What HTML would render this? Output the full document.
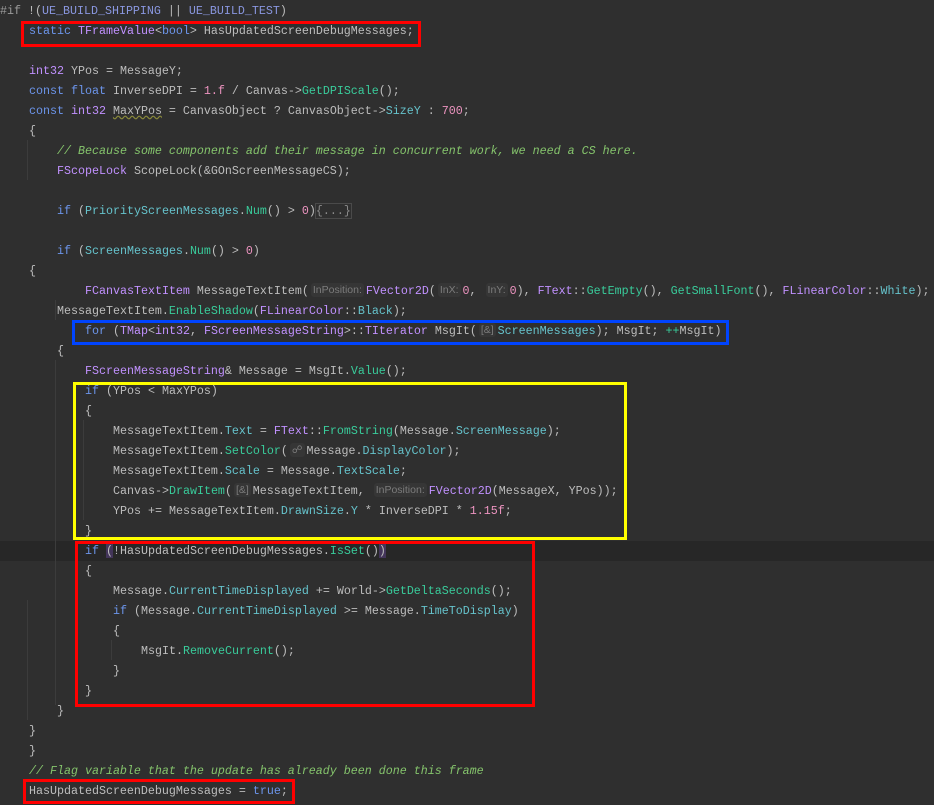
<!DOCTYPE html>
<html><head><meta charset="utf-8"><style>
html,body{margin:0;padding:0;background:#2f2f2f;width:934px;height:805px;overflow:hidden}
body{position:relative;font-family:"Liberation Mono",monospace;font-size:11.67px;color:#bdbdbd}
.l{position:absolute;left:0;height:20px;line-height:20px;white-space:pre}
.k{color:#6c95eb}.t{color:#c191ff}.f{color:#39cc9b}.d{color:#66c3cc}.n{color:#ed94c0}
.c{color:#85c46c;font-style:italic}.m{color:#9b9b9b}.mc{color:#8a97e0}
.h{display:inline-block;font-family:"Liberation Sans",sans-serif;font-size:10.5px;color:#7c7c7c;background:#363636;border-radius:3px;padding:0 2px;line-height:14px;margin:0 2px;vertical-align:1px}
.box{position:absolute;border:3px solid;box-sizing:border-box}
.g{position:absolute;width:1px;background:#3c3c3c}
</style></head><body>
<div style="position:absolute;left:0;top:541px;width:934px;height:20px;background:#272727"></div>
<div class="g" style="left:27px;top:140px;height:40px"></div>
<div class="g" style="left:55px;top:300px;height:20px"></div>
<div class="g" style="left:55px;top:360px;height:345px"></div>
<div class="g" style="left:27px;top:600px;height:120px"></div>
<div class="g" style="left:83px;top:420px;height:100px"></div>
<div class="g" style="left:111px;top:640px;height:20px"></div>

<div class="l" style="top:1px"><span class="m">#if</span> !(<span class="mc">UE_BUILD_SHIPPING</span> || <span class="mc">UE_BUILD_TEST</span>)</div>
<div class="l" style="top:21px;left:29px"><span class="k">static</span> <span class="t">TFrameValue</span>&lt;<span class="k">bool</span>&gt; HasUpdatedScreenDebugMessages;</div>
<div class="l" style="top:61px;left:29px"><span class="t">int32</span> YPos = MessageY;</div>
<div class="l" style="top:81px;left:29px"><span class="k">const float</span> InverseDPI = <span class="n">1.f</span> / Canvas-&gt;<span class="f">GetDPIScale</span>();</div>
<div class="l" style="top:101px;left:29px"><span class="k">const</span> <span class="t">int32</span> <span style="text-decoration:underline wavy #8a8a3a">MaxYPos</span> = CanvasObject ? CanvasObject-&gt;<span class="d">SizeY</span> : <span class="n">700</span>;</div>
<div class="l" style="top:121px;left:29px">{</div>
<div class="l" style="top:141px;left:57px"><span class="c">// Because some components add their message in concurrent work, we need a CS here.</span></div>
<div class="l" style="top:161px;left:57px"><span class="t">FScopeLock</span> ScopeLock(&amp;GOnScreenMessageCS);</div>
<div class="l" style="top:201px;left:57px"><span class="k">if</span> (<span class="d">PriorityScreenMessages</span>.<span class="f">Num</span>() &gt; <span class="n">0</span>)<span style="color:#8a8a8a;outline:1px solid #4a4a4a">{...}</span></div>
<div class="l" style="top:241px;left:57px"><span class="k">if</span> (<span class="d">ScreenMessages</span>.<span class="f">Num</span>() &gt; <span class="n">0</span>)</div>
<div class="l" style="top:261px;left:29px">{</div>
<div class="l" style="top:281px;left:85px"><span class="t">FCanvasTextItem</span> MessageTextItem(<span class="h">InPosition:</span><span class="t">FVector2D</span>(<span class="h">InX:</span><span class="n">0</span>, <span class="h">InY:</span><span class="n">0</span>), <span class="t">FText</span>::<span class="f">GetEmpty</span>(), <span class="f">GetSmallFont</span>(), <span class="t">FLinearColor</span>::<span class="d">White</span>);</div>
<div class="l" style="top:301px;left:57px">MessageTextItem.<span class="f">EnableShadow</span>(<span class="t">FLinearColor</span>::<span class="d">Black</span>);</div>
<div class="l" style="top:321px;left:85px"><span class="k">for</span> (<span class="t">TMap</span>&lt;<span class="t">int32</span>, <span class="t">FScreenMessageString</span>&gt;::<span class="t">TIterator</span> MsgIt(<span class="h">[&amp;]</span><span class="d">ScreenMessages</span>); MsgIt; <span class="f">++</span>MsgIt)</div>
<div class="l" style="top:341px;left:57px">{</div>
<div class="l" style="top:361px;left:85px"><span class="t">FScreenMessageString</span>&amp; Message = MsgIt.<span class="f">Value</span>();</div>
<div class="l" style="top:381px;left:85px"><span class="k">if</span> (YPos &lt; MaxYPos)</div>
<div class="l" style="top:401px;left:85px">{</div>
<div class="l" style="top:421px;left:113px">MessageTextItem.<span class="d">Text</span> = <span class="t">FText</span>::<span class="f">FromString</span>(Message.<span class="d">ScreenMessage</span>);</div>
<div class="l" style="top:441px;left:113px">MessageTextItem.<span class="f">SetColor</span>(<span class="h">&#9741;</span>Message.<span class="d">DisplayColor</span>);</div>
<div class="l" style="top:461px;left:113px">MessageTextItem.<span class="d">Scale</span> = Message.<span class="d">TextScale</span>;</div>
<div class="l" style="top:481px;left:113px">Canvas-&gt;<span class="f">DrawItem</span>(<span class="h">[&amp;]</span>MessageTextItem, <span class="h">InPosition:</span><span class="t">FVector2D</span>(MessageX, YPos));</div>
<div class="l" style="top:501px;left:113px">YPos += MessageTextItem.<span class="d">DrawnSize</span>.<span class="d">Y</span> * InverseDPI * <span class="n">1.15f</span>;</div>
<div class="l" style="top:521px;left:85px">}</div>
<div class="l" style="top:541px;left:85px"><span class="k">if</span> <span style="background:#43355a">(</span>!HasUpdatedScreenDebugMessages.<span class="f">IsSet</span>()<span style="background:#43355a">)</span></div>
<div class="l" style="top:561px;left:85px">{</div>
<div class="l" style="top:581px;left:113px">Message.<span class="d">CurrentTimeDisplayed</span> += World-&gt;<span class="f">GetDeltaSeconds</span>();</div>
<div class="l" style="top:601px;left:113px"><span class="k">if</span> (Message.<span class="d">CurrentTimeDisplayed</span> &gt;= Message.<span class="d">TimeToDisplay</span>)</div>
<div class="l" style="top:621px;left:113px">{</div>
<div class="l" style="top:641px;left:141px">MsgIt.<span class="f">RemoveCurrent</span>();</div>
<div class="l" style="top:661px;left:113px">}</div>
<div class="l" style="top:681px;left:85px">}</div>
<div class="l" style="top:701px;left:57px">}</div>
<div class="l" style="top:721px;left:29px">}</div>
<div class="l" style="top:741px;left:29px">}</div>
<div class="l" style="top:761px;left:29px"><span class="c">// Flag variable that the update has already been done this frame</span></div>
<div class="l" style="top:781px;left:29px">HasUpdatedScreenDebugMessages = <span class="k">true</span>;</div>

<div class="box" style="border-color:#ff0000;left:21px;top:21px;width:400px;height:26px"></div>
<div class="box" style="border-color:#0044ff;left:72px;top:320px;width:657px;height:25px"></div>
<div class="box" style="border-color:#ffff00;left:73px;top:382px;width:554px;height:158px"></div>
<div class="box" style="border-color:#ff0000;left:75px;top:541px;width:460px;height:166px"></div>
<div class="box" style="border-color:#ff0000;left:23px;top:779px;width:272px;height:25px"></div>
</body></html>
